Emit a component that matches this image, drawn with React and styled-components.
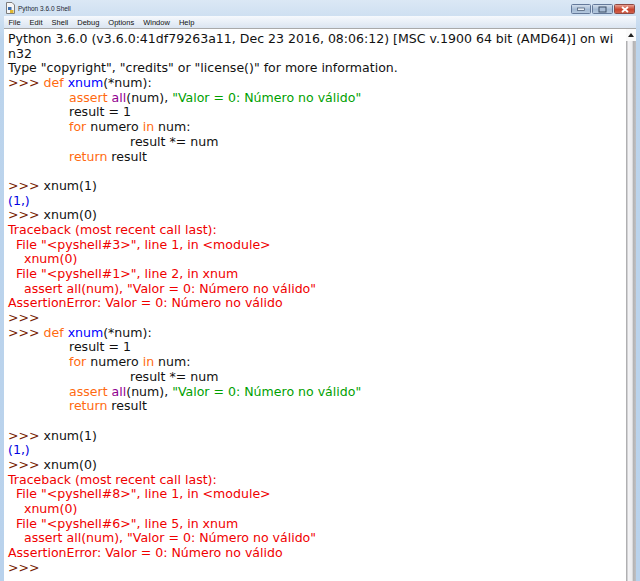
import React from 'react';
import styled, { createGlobalStyle } from 'styled-components';

const GlobalStyle = createGlobalStyle`
  html, body {
    margin: 0;
    padding: 0;
    background: #b9d3ee;
  }
`;

const Window = styled.div`
  width: 640px;
  height: 581px;
  overflow: hidden;
  display: flex;
  flex-direction: column;
  background: linear-gradient(#dbe8f5, #bcd4ec 40px, #b9d2ec);
  font-family: "Liberation Sans", sans-serif;
`;

const TitleBar = styled.div`
  height: 16px;
  flex-shrink: 0;
  display: flex;
  align-items: center;
  padding: 0 5px 0 5px;
  gap: 2px;
`;

const Title = styled.span`
  font-size: 6.5px;
  color: #1c2430;
  flex: 1;
`;

const Caption = styled.div`
  display: flex;
  gap: 1px;
  margin-top: 2px;
`;

const CaptionButton = styled.div`
  box-sizing: border-box;
  width: ${(p) => (p.$wide ? 21 : 20)}px;
  height: 10px;
  border: 1px solid ${(p) => (p.$close ? '#8e4a44' : '#64799a')};
  border-radius: 1.5px;
  background: ${(p) =>
    p.$close
      ? 'linear-gradient(#e8a294, #c9452f 55%, #d0604a)'
      : 'linear-gradient(#d2deec, #a4bad4 55%, #b4c8de)'};
  display: flex;
  align-items: center;
  justify-content: center;
`;

const MenuBar = styled.div`
  height: 12px;
  flex-shrink: 0;
  margin: 0 4px;
  display: flex;
  align-items: center;
  padding-left: 4.5px;
  gap: 9px;
  background: linear-gradient(#f6f9fd, #dbe5f1);
  font-size: 7.5px;
  color: #111;
`;

const Body = styled.div`
  flex: 1;
  min-height: 0;
  margin: 0 4px;
  display: flex;
  background: #ffffff;
  border-top: 1px solid #a9a9a9;
`;

const Shell = styled.pre`
  flex: 1;
  min-width: 0;
  margin: 0;
  padding: 3px 0 0 4px;
  font-family: "DejaVu Sans", sans-serif;
  font-size: 12.55px;
  line-height: 14.69px;
  color: #111;
  overflow: hidden;
`;

const Line = styled.div`
  height: 14.69px;
  white-space: pre;
  color: ${(p) => p.$color || '#111'};
  padding-left: ${(p) => p.$indent || 0}px;
`;

const Kw = styled.span`
  color: ${(p) => p.$color};
`;

const Scrollbar = styled.div`
  box-sizing: border-box;
  width: 10px;
  flex-shrink: 0;
  display: flex;
  flex-direction: column;
  background: #fbfbfb;
`;

const ScrollUp = styled.div`
  height: 12px;
  display: flex;
  align-items: center;
  justify-content: center;
`;

const Thumb = styled.div`
  flex: 1;
  background: linear-gradient(90deg, #b0b0b2 0, #b0b0b2 10%, #f4f4f6 20%, #ececee 60%, #b4b4b6 75%, #c0c0c2 100%);
`;

const Orange = ({ children }) => <Kw $color="#ff6a10">{children}</Kw>;
const Purple = ({ children }) => <Kw $color="#900090">{children}</Kw>;
const Green = ({ children }) => <Kw $color="#00a000">{children}</Kw>;
const Blue = ({ children }) => <Kw $color="#0000ff">{children}</Kw>;
const Prompt = () => <Kw $color="#772200">{'>>> '}</Kw>;

const RED = '#f00000';
const BLUE = '#0000e0';

const msg = '"Valor = 0: Número no válido"';

const FirstDef = () => (
  <>
    <Line><Prompt /><Orange>def </Orange><Blue>xnum</Blue>(*num):</Line>
    <Line $indent={61}><Orange>assert </Orange><Purple>all</Purple>(num), <Green>{msg}</Green></Line>
    <Line $indent={61}>result = 1</Line>
    <Line $indent={61}><Orange>for</Orange> numero <Orange>in</Orange> num:</Line>
    <Line $indent={122}>result *= num</Line>
    <Line $indent={61}><Orange>return</Orange> result</Line>
  </>
);

const SecondDef = () => (
  <>
    <Line><Prompt /><Orange>def </Orange><Blue>xnum</Blue>(*num):</Line>
    <Line $indent={61}>result = 1</Line>
    <Line $indent={61}><Orange>for</Orange> numero <Orange>in</Orange> num:</Line>
    <Line $indent={122}>result *= num</Line>
    <Line $indent={61}><Orange>assert </Orange><Purple>all</Purple>(num), <Green>{msg}</Green></Line>
    <Line $indent={61}><Orange>return</Orange> result</Line>
  </>
);

const Run = ({ first, second, lineNo }) => (
  <>
    <Line>&nbsp;</Line>
    <Line><Prompt />xnum(1)</Line>
    <Line $color={BLUE}>(1,)</Line>
    <Line><Prompt />xnum(0)</Line>
    <Line $color={RED}>Traceback (most recent call last):</Line>
    <Line $color={RED}>{`  File "<pyshell#${first}>", line 1, in <module>`}</Line>
    <Line $color={RED}>{'    xnum(0)'}</Line>
    <Line $color={RED}>{`  File "<pyshell#${second}>", line ${lineNo}, in xnum`}</Line>
    <Line $color={RED}>{`    assert all(num), ${msg}`}</Line>
    <Line $color={RED}>AssertionError: Valor = 0: Número no válido</Line>
  </>
);

export default function App() {
  return (
    <Window>
      <GlobalStyle />
      <TitleBar>
        <svg width="11" height="12" viewBox="0 0 11 12">
          <path d="M1.5 0.5h5.5l2.5 2.5v8.5h-8z" fill="#f6f6f6" stroke="#7d7d7d" />
          <rect x="3" y="5" width="3.5" height="3" fill="#3b6fb0" />
          <rect x="5" y="8" width="3.5" height="3" fill="#e0b830" />
        </svg>
        <Title>Python 3.6.0 Shell</Title>
        <Caption>
          <CaptionButton>
            <svg width="8" height="4"><rect x="0.5" y="1" width="7" height="2.4" fill="#e8eef5" stroke="#45566e" strokeWidth="0.7" /></svg>
          </CaptionButton>
          <CaptionButton $wide>
            <svg width="9" height="7"><rect x="1" y="1" width="7" height="5" fill="#a9bdd6" stroke="#3d4e66" strokeWidth="1" /></svg>
          </CaptionButton>
          <CaptionButton $wide $close>
            <svg width="8" height="7"><path d="M1 1l6 5M7 1L1 6" stroke="#fff" strokeWidth="1.8" /></svg>
          </CaptionButton>
        </Caption>
      </TitleBar>
      <MenuBar>
        <span>File</span><span>Edit</span><span>Shell</span><span>Debug</span><span>Options</span><span>Window</span><span>Help</span>
      </MenuBar>
      <Body>
        <Shell>
          <Line>Python 3.6.0 (v3.6.0:41df79263a11, Dec 23 2016, 08:06:12) [MSC v.1900 64 bit (AMD64)] on wi</Line>
          <Line>n32</Line>
          <Line>Type "copyright", "credits" or "license()" for more information.</Line>
          <FirstDef />
          <Run first={3} second={1} lineNo={2} />
          <Line><Prompt /></Line>
          <SecondDef />
          <Run first={8} second={6} lineNo={5} />
          <Line><Prompt /></Line>
        </Shell>
        <Scrollbar>
          <ScrollUp>
            <svg width="6" height="4" viewBox="0 0 6 4"><path d="M0 4L3 0 6 4z" fill="#222" /></svg>
          </ScrollUp>
          <Thumb />
        </Scrollbar>
      </Body>
    </Window>
  );
}
